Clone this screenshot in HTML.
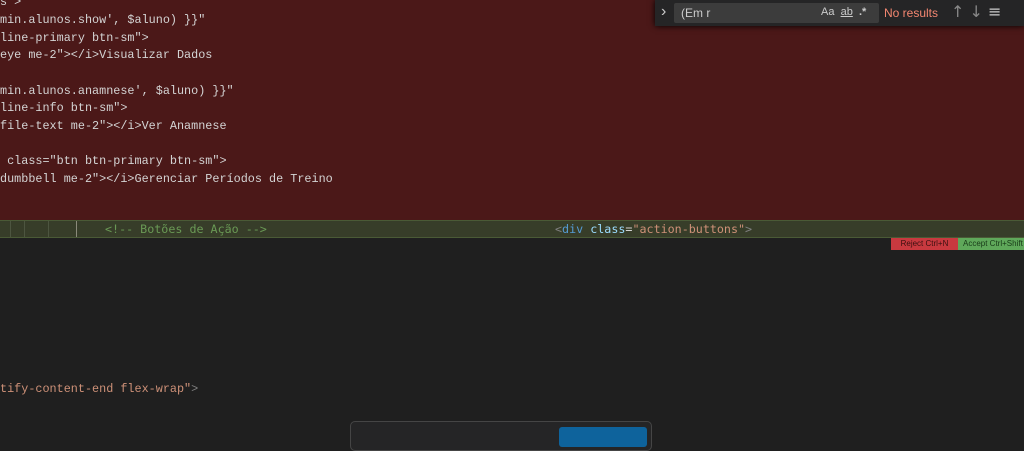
<!DOCTYPE html>
<html><head><style>
body{margin:0;width:1024px;height:431px;overflow:hidden;background:#1f1f1f;position:relative;font-family:"Liberation Mono",monospace;}
.red{position:absolute;left:0;top:0;width:1024px;height:220px;background:#4b1818;}
.l{position:absolute;left:0;font-size:11.8px;color:#d4d4d4;white-space:pre;line-height:17px;}
.green{position:absolute;left:0;top:220px;width:1024px;height:18px;background:#373d29;border-top:1px solid #4a5a36;border-bottom:1px solid #4a5a36;box-sizing:border-box;}
.gt{position:absolute;top:222px;font-family:"DejaVu Sans Mono","Liberation Mono",monospace;font-size:11.7px;line-height:14px;white-space:pre;}
.vl{position:absolute;top:221px;width:1px;height:16px;background:#4d5540;}
</style></head><body>
<div class="red"></div>
<div class="l" style="top:-6px">s &gt;</div>
<div class="l" style="top:12px">min.alunos.show', $aluno) }}"</div>
<div class="l" style="top:30px">line-primary btn-sm"&gt;</div>
<div class="l" style="top:47px">eye me-2"&gt;&lt;/i&gt;Visualizar Dados</div>
<div class="l" style="top:83px">min.alunos.anamnese', $aluno) }}"</div>
<div class="l" style="top:100px">line-info btn-sm"&gt;</div>
<div class="l" style="top:118px">file-text me-2"&gt;&lt;/i&gt;Ver Anamnese</div>
<div class="l" style="top:153px"> class="btn btn-primary btn-sm"&gt;</div>
<div class="l" style="top:171px">dumbbell me-2"&gt;&lt;/i&gt;Gerenciar Períodos de Treino</div>
<div class="green"></div>
<div class="vl" style="left:10px"></div><div class="vl" style="left:24px"></div><div class="vl" style="left:48px"></div><div class="vl" style="left:76px;background:#8a8a7a"></div>
<div class="gt" style="left:105px;color:#6a9955">&lt;!-- Botões de Ação --&gt;</div>
<div class="gt" style="left:555px;color:#808080">&lt;<span style="color:#569cd6">div</span> <span style="color:#9cdcfe">class</span><span style="color:#d4d4d4">=</span><span style="color:#ce9178">"action-buttons"</span>&gt;</div>
<div style="position:absolute;left:891px;top:238px;width:67px;height:12px;background:#c8393f;color:#3a1010;font:8px 'Liberation Sans',sans-serif;line-height:12px;text-align:center">Reject Ctrl+N</div>
<div style="position:absolute;left:958px;top:238px;width:70px;height:12px;background:#5fa85a;color:#183a18;font:8px 'Liberation Sans',sans-serif;line-height:12px;padding-left:5px;white-space:nowrap">Accept Ctrl+Shift</div>
<div class="l" style="top:381px;color:#ce9178">tify-content-end flex-wrap"<span style="color:#808080">&gt;</span></div>
<div style="position:absolute;left:655px;top:0;width:369px;height:26px;background:#252526;box-shadow:0 0 6px #000;"></div>
<div style="position:absolute;left:661px;top:3px;color:#ccc;font:16px 'Liberation Sans',sans-serif">›</div>
<div style="position:absolute;left:674px;top:3px;width:205px;height:20px;background:#3c3c3c;border-radius:2px"></div>
<div style="position:absolute;left:681px;top:6px;color:#ccc;font:12px 'Liberation Sans',sans-serif">(Em r</div>
<div style="position:absolute;left:821px;top:6px;color:#ccc;font:11px 'Liberation Sans',sans-serif;white-space:pre">Aa  <u>ab</u>  <b>.*</b></div>
<div style="position:absolute;left:884px;top:6px;color:#f48771;font:12px 'Liberation Sans',sans-serif">No results</div>
<div style="position:absolute;left:951px;top:2px;color:#888;font:16px 'DejaVu Sans',sans-serif;white-space:pre">↑ ↓ <span style="color:#ccc">≡</span></div>
<div style="position:absolute;left:350px;top:421px;width:302px;height:30px;background:#252526;border:1px solid #454545;border-radius:5px;box-sizing:border-box"></div>
<div style="position:absolute;left:559px;top:427px;width:88px;height:20px;background:#0e639c;border-radius:3px"></div>
</body></html>
